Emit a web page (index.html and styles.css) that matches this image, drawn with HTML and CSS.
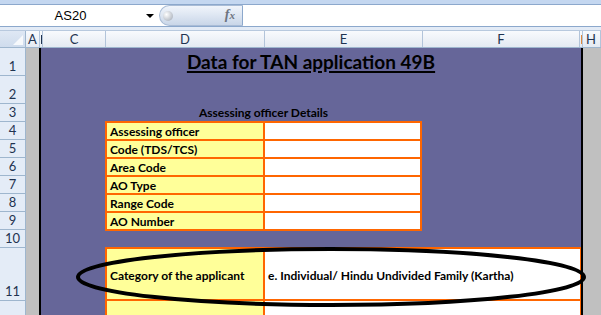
FILE: index.html
```html
<!DOCTYPE html>
<html lang="en">
<head>
    <meta charset="UTF-8">
    <title>Data for TAN application 49B</title>
    <link rel="stylesheet" href="styles.css">
</head>
<body>
    <div class="app">
        <div class="top-strip"></div>

        <div class="formula-bar">
            <div class="name-box">
                <span class="name">AS20</span>
                <span class="drop-arrow"></span>
            </div>
            <div class="fx-widget">
                <span class="knob"></span>
                <span class="fx">f<span class="fx-sub">x</span></span>
            </div>
            <div class="formula-input"></div>
        </div>

        <div class="gap-strip"></div>

        <div class="col-headers">
            <div class="corner"><span class="corner-tri"></span></div>
            <div class="colh col-a">A</div>
            <div class="colh col-b"><span class="sliver"></span></div>
            <div class="colh col-c">C</div>
            <div class="colh col-d">D</div>
            <div class="colh col-e">E</div>
            <div class="colh col-f">F</div>
            <div class="colh col-g"><span class="sliver orange"></span></div>
            <div class="colh col-h">H</div>
        </div>

        <div class="sheet">
            <div class="row-heads">
                <div class="rh tall">1</div>
                <div class="rh tall">2</div>
                <div class="rh">3</div>
                <div class="rh">4</div>
                <div class="rh">5</div>
                <div class="rh">6</div>
                <div class="rh">7</div>
                <div class="rh">8</div>
                <div class="rh">9</div>
                <div class="rh">10</div>
                <div class="rh big">11</div>
                <div class="rh"></div>
            </div>
            <div class="side-grey"></div>
            <div class="side-black"></div>

            <div class="canvas">
                <div class="title-row">
                    <span class="title">Data for TAN application 49B</span>
                </div>
                <div class="blank-row"></div>
                <div class="section-row">Assessing officer Details</div>

                <div class="officer-table">
                    <div class="label">Assessing officer</div><div class="value"></div>
                    <div class="label">Code (TDS/TCS)</div><div class="value"></div>
                    <div class="label">Area Code</div><div class="value"></div>
                    <div class="label">AO Type</div><div class="value"></div>
                    <div class="label">Range Code</div><div class="value"></div>
                    <div class="label">AO Number</div><div class="value"></div>
                </div>

                <div class="spacer-row"></div>

                <div class="applicant-table">
                    <div class="label tall-cell">Category of the applicant</div>
                    <div class="value tall-cell">e. Individual/ Hindu Undivided Family (Kartha)</div>
                    <div class="label"></div>
                    <div class="value"></div>
                </div>
            </div>

            <div class="side-black"></div>
            <div class="side-grey"></div>
        </div>

        <!-- hand drawn highlight round row 11 -->
        <svg class="highlight" width="601" height="315" viewBox="0 0 601 315">
            <ellipse cx="331" cy="277" rx="253" ry="28" fill="none" stroke="#000" stroke-width="4"/>
        </svg>
    </div>
</body>
</html>
```

FILE: styles.css
```css
body {
    margin: 0;
    background-color: #ffffff;
    font-family: Lato, "Liberation Sans", sans-serif;
}

.app {
    position: relative;
    width: 601px;
    height: 315px;
    overflow: hidden;
    background-color: #dde8f5;
}

.top-strip {
    height: 4px;
    background-color: #c4d7f0;
    border-bottom: 1px solid #8ca8cc;
}

.formula-bar {
    display: flex;
    height: 21px;
    background-color: #ffffff;
    border-bottom: 1px solid #8ca8cc;
}

.name-box {
    position: relative;
    width: 159px;
    display: flex;
    align-items: center;
    justify-content: center;
    font-family: "Liberation Sans", Arial, sans-serif;
    font-size: 13px;
    color: #000;
}

.name {
    margin-left: -18px;
}

.drop-arrow {
    position: absolute;
    left: 146px;
    top: 9px;
    border-left: 4px solid transparent;
    border-right: 4px solid transparent;
    border-top: 4px solid #000;
}

.fx-widget {
    position: relative;
    width: 84px;
    border-radius: 11px 0 0 11px;
    border: 1px solid #a9bcd6;
    border-right: 1px solid #8ca8cc;
    background: linear-gradient(#f1f5fb, #dbe4f1 55%, #c9d6e8);
    box-sizing: border-box;
    height: 21px;
}

.knob {
    position: absolute;
    left: 3px;
    top: 5px;
    width: 10px;
    height: 10px;
    border-radius: 50%;
    background: radial-gradient(circle at 35% 35%, #ffffff, #b9bfc8 70%, #9aa2ad);
}

.fx {
    position: absolute;
    right: 7px;
    top: 1px;
    font-family: "Liberation Serif", serif;
    font-style: italic;
    font-weight: bold;
    font-size: 14px;
    color: #6d7480;
}

.fx-sub {
    font-size: 11px;
}

.formula-input {
    flex: 1;
}

.gap-strip {
    height: 3px;
    background-color: #e3ebf6;
}

.col-headers {
    display: flex;
    height: 16px;
    border-top: 1px solid #b8c9de;
    border-bottom: 1px solid #9eb6ce;
    background: linear-gradient(#f8fafd, #e4eaf2);
    font-family: Lato, "Liberation Sans", sans-serif;
    font-size: 13px;
    color: #1f3350;
}

.corner {
    position: relative;
    width: 25px;
    border-right: 1px solid #9eb6ce;
    background: linear-gradient(#dfe8f4, #cfdced);
}

.corner-tri {
    position: absolute;
    right: 2px;
    bottom: 2px;
    border-left: 10px solid transparent;
    border-bottom: 10px solid #ffffff;
    opacity: 0.8;
}

.colh {
    display: flex;
    align-items: center;
    justify-content: center;
    overflow: hidden;
    border-right: 1px solid #b2c4da;
    box-sizing: border-box;
}

.col-a { width: 14px; }
.col-b { width: 3px; }
.col-c { width: 63px; }
.col-d { width: 159px; }
.col-e { width: 158px; }
.col-f { width: 157px; }
.col-g { width: 3px; }
.col-h { width: 18px; justify-content: flex-start; padding-left: 3px; }

.sliver {
    width: 1px;
    height: 9px;
    background-color: #1f3350;
}

.sliver.orange {
    background-color: #e08a3c;
}

.sheet {
    display: flex;
    height: 267px;
}

.row-heads {
    width: 25px;
    border-right: 1px solid #9eb6ce;
    background-color: #e4ecf7;
    display: flex;
    flex-direction: column;
}

.rh {
    height: 17px;
    border-bottom: 1px solid #9eb6ce;
    display: flex;
    align-items: flex-end;
    justify-content: center;
    font-size: 13px;
    line-height: 17px;
    color: #1f3350;
    flex-shrink: 0;
}

.rh.tall {
    height: 27px;
}

.rh.big {
    height: 52px;
}

.side-grey {
    width: 13px;
    background-color: #c0c0c0;
}

.side-grey:last-child {
    width: 18px;
}

.side-black {
    width: 2px;
    background-color: #000;
}

.canvas {
    width: 540px;
    background-color: #666699;
    display: flex;
    flex-direction: column;
    color: #000;
    font-family: Lato, "Liberation Sans", sans-serif;
    font-weight: bold;
}

.canvas > * {
    flex-shrink: 0;
}

.title-row {
    height: 28px;
    display: flex;
    align-items: flex-end;
    justify-content: center;
}

.title {
    font-size: 19px;
    line-height: 22px;
    text-decoration: underline;
    text-decoration-thickness: 2px;
    text-underline-offset: 2px;
    margin-bottom: 3px;
}

.blank-row {
    height: 28px;
}

.section-row {
    height: 17px;
    width: 317px;
    margin-left: 64px;
    text-align: center;
    font-size: 12px;
    line-height: 18px;
}

.officer-table,
.applicant-table {
    display: grid;
    gap: 2px;
    padding: 2px;
    margin-left: 64px;
    background-color: #ff6600;
    font-size: 12px;
}

.officer-table {
    width: 313px;
    grid-template-columns: 156px 155px;
    grid-auto-rows: 16px;
}

.applicant-table {
    width: 473px;
    grid-template-columns: 156px 315px;
    grid-template-rows: 50px 30px;
}

.label {
    background-color: #ffff99;
    padding-left: 3px;
    line-height: 17px;
    white-space: nowrap;
}

.value {
    background-color: #ffffff;
    padding-left: 3px;
    line-height: 17px;
    white-space: nowrap;
}

.tall-cell {
    display: flex;
    align-items: center;
    padding-top: 3px;
}

.spacer-row {
    height: 16px;
}

.highlight {
    position: absolute;
    left: 0;
    top: 0;
    pointer-events: none;
}
```
